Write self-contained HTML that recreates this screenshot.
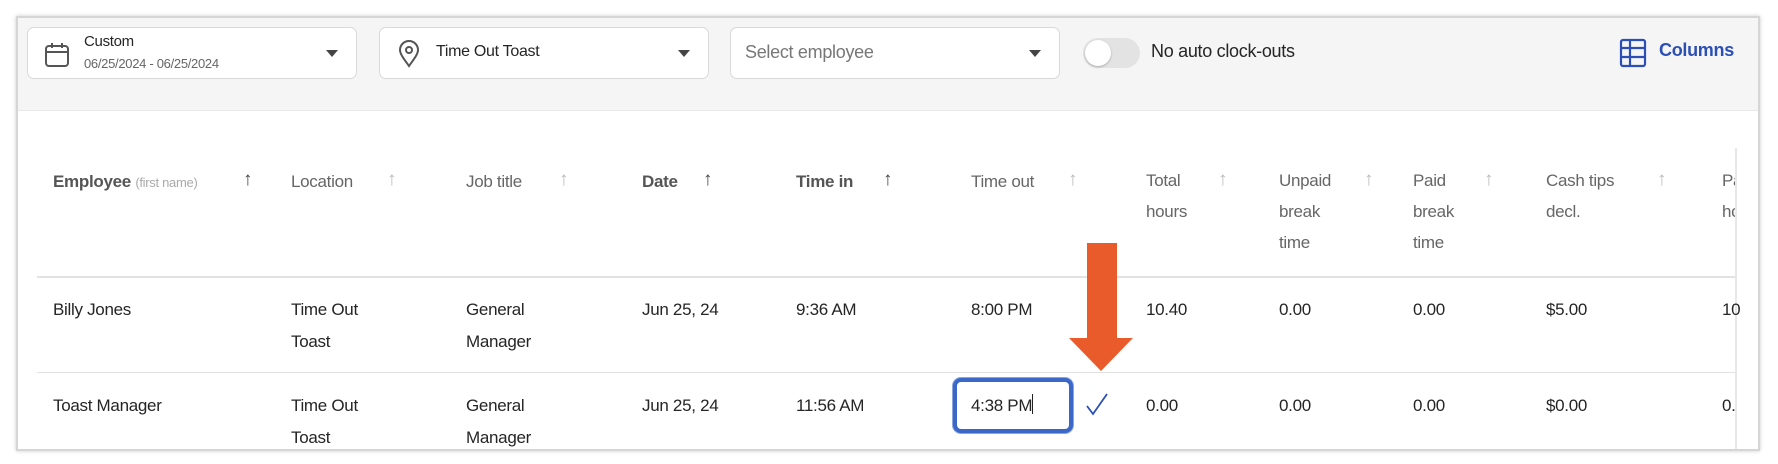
<!DOCTYPE html>
<html><head><meta charset="utf-8"><style>
*{margin:0;padding:0;box-sizing:border-box}
body{width:1778px;height:464px;background:#fff;font-family:"Liberation Sans",sans-serif;color:#252525;position:relative;overflow:hidden}
.card{position:absolute;left:16px;top:16px;width:1744px;height:435px;border:2px solid #d6d6d6;box-shadow:0 0 4px #ccc;background:#fff;overflow:hidden}
.bar{position:absolute;left:0;top:0;width:100%;height:93px;background:#f5f5f5;border-bottom:1px solid #e8e8e8}
.dd{position:absolute;top:9px;height:52px;width:330px;background:#fff;border:1px solid #d9d9d9;border-radius:7px}
.caret{position:absolute;right:18px;top:22px;width:0;height:0;border-left:6px solid transparent;border-right:6px solid transparent;border-top:7px solid #444}
.a{position:absolute;font-size:17px;white-space:nowrap;letter-spacing:-0.3px}
.h{color:#666}
.b{font-weight:bold;color:#555}
.up{color:#bbb;font-size:19px}
.upd{color:#444}
.hl{position:absolute;height:2px;background:#e2e2e2}
</style></head><body>
<div class="card">
<div class="bar">
 <div class="dd" style="left:9px">
  <svg style="position:absolute;left:16px;top:14px" width="26" height="26" viewBox="0 0 26 26" fill="none" stroke="#555" stroke-width="2"><rect x="2" y="4" width="22" height="20" rx="3"/><line x1="2" y1="10" x2="24" y2="10"/><line x1="8" y1="1" x2="8" y2="6"/><line x1="18" y1="1" x2="18" y2="6"/></svg>
  <div class="a" style="left:56px;top:5px;font-size:15px">Custom</div>
  <div class="a" style="left:56px;top:28px;font-size:13px;color:#666">06/25/2024 - 06/25/2024</div>
  <div class="caret"></div>
 </div>
 <div class="dd" style="left:361px">
  <svg style="position:absolute;left:18px;top:12px" width="22" height="28" viewBox="0 0 22 28" fill="none" stroke="#555" stroke-width="2"><path d="M11 26C6 19 2 14 2 10a9 9 0 0 1 18 0c0 4-4 9-9 16z"/><circle cx="11" cy="10" r="3"/></svg>
  <div class="a" style="left:56px;top:15px;font-size:16px">Time Out Toast</div>
  <div class="caret"></div>
 </div>
 <div class="dd" style="left:712px">
  <div class="a" style="left:14px;top:14px;font-size:18px;color:#777">Select employee</div>
  <div class="caret"></div>
 </div>
 <div style="position:absolute;left:1065px;top:20px;width:57px;height:30px;border-radius:15px;background:#e3e3e3"></div>
 <div style="position:absolute;left:1067px;top:22px;width:26px;height:26px;border-radius:13px;background:#fff;box-shadow:0 1px 2px #aaa"></div>
 <div class="a" style="left:1133px;top:23px;font-size:18px">No auto clock-outs</div>
 <svg style="position:absolute;left:1601px;top:20px" width="28" height="30" viewBox="0 0 28 30" fill="none" stroke="#2c4fb5" stroke-width="2.2"><rect x="2" y="2" width="24" height="26" rx="2"/><line x1="2" y1="10" x2="26" y2="10"/><line x1="2" y1="19" x2="26" y2="19"/><line x1="11" y1="2" x2="11" y2="28"/></svg>
 <div class="a" style="left:1641px;top:22px;font-size:18px;font-weight:bold;color:#2c4fb5">Columns</div>
</div>

<!-- header -->
<div class="a b" style="left:35px;top:154px">Employee <span style="font-weight:normal;color:#aaa;font-size:13px">(first name)</span></div>
<div class="a upd" style="left:225px;top:151px;font-size:19px">↑</div>
<div class="a h" style="left:273px;top:154px">Location</div><div class="a up" style="left:369px;top:151px">↑</div>
<div class="a h" style="left:448px;top:154px">Job title</div><div class="a up" style="left:541px;top:151px">↑</div>
<div class="a b" style="left:624px;top:154px">Date</div><div class="a upd" style="left:685px;top:151px;font-size:19px">↑</div>
<div class="a b" style="left:778px;top:154px">Time in</div><div class="a upd" style="left:865px;top:151px;font-size:19px">↑</div>
<div class="a h" style="left:953px;top:154px">Time out</div><div class="a up" style="left:1050px;top:151px">↑</div>
<div class="a h" style="left:1128px;top:147px;line-height:31px">Total<br>hours</div><div class="a up" style="left:1200px;top:151px">↑</div>
<div class="a h" style="left:1261px;top:147px;line-height:31px">Unpaid<br>break<br>time</div><div class="a up" style="left:1346px;top:151px">↑</div>
<div class="a h" style="left:1395px;top:147px;line-height:31px">Paid<br>break<br>time</div><div class="a up" style="left:1466px;top:151px">↑</div>
<div class="a h" style="left:1528px;top:147px;line-height:31px">Cash tips<br>decl.</div><div class="a up" style="left:1639px;top:151px">↑</div>
<div class="a h" style="left:1704px;top:147px;line-height:31px">Pa<br>ho</div>
<div style="position:absolute;left:1717px;top:130px;width:30px;height:320px;background:#fff;border-left:2px solid #e8e8e8"></div>

<div class="hl" style="left:19px;top:258px;width:1698px"></div>
<div class="hl" style="left:19px;top:354px;width:1698px;height:1px"></div>

<!-- row1 -->
<div class="a" style="left:35px;top:276px;line-height:32px">Billy Jones</div>
<div class="a" style="left:273px;top:276px;line-height:32px">Time Out<br>Toast</div>
<div class="a" style="left:448px;top:276px;line-height:32px">General<br>Manager</div>
<div class="a" style="left:624px;top:276px;line-height:32px">Jun 25, 24</div>
<div class="a" style="left:778px;top:276px;line-height:32px">9:36 AM</div>
<div class="a" style="left:953px;top:276px;line-height:32px">8:00 PM</div>
<div class="a" style="left:1128px;top:276px;line-height:32px">10.40</div>
<div class="a" style="left:1261px;top:276px;line-height:32px">0.00</div>
<div class="a" style="left:1395px;top:276px;line-height:32px">0.00</div>
<div class="a" style="left:1528px;top:276px;line-height:32px">$5.00</div>
<div class="a" style="left:1704px;top:276px;line-height:32px">10</div>

<!-- row2 -->
<div class="a" style="left:35px;top:372px;line-height:32px">Toast Manager</div>
<div class="a" style="left:273px;top:372px;line-height:32px">Time Out<br>Toast</div>
<div class="a" style="left:448px;top:372px;line-height:32px">General<br>Manager</div>
<div class="a" style="left:624px;top:372px;line-height:32px">Jun 25, 24</div>
<div class="a" style="left:778px;top:372px;line-height:32px">11:56 AM</div>
<div style="position:absolute;left:935px;top:360px;width:120px;height:55px;border:4px solid #3b68c7;border-radius:8px;background:#fff;box-shadow:0 0 0 1px #8aa6e0"></div>
<div class="a" style="left:953px;top:372px;line-height:32px">4:38 PM<span style="display:inline-block;width:1px;height:20px;background:#222;vertical-align:-3px"></span></div>
<svg style="position:absolute;left:1067px;top:374px" width="24" height="24" viewBox="0 0 24 24" fill="none" stroke="#2c4fb5" stroke-width="1.8"><path d="M2 14l6 8L22 2"/></svg>
<div class="a" style="left:1128px;top:372px;line-height:32px">0.00</div>
<div class="a" style="left:1261px;top:372px;line-height:32px">0.00</div>
<div class="a" style="left:1395px;top:372px;line-height:32px">0.00</div>
<div class="a" style="left:1528px;top:372px;line-height:32px">$0.00</div>
<div class="a" style="left:1704px;top:372px;line-height:32px">0.</div>

<!-- arrow -->
<svg style="position:absolute;left:1051px;top:225px" width="66" height="130" viewBox="0 0 66 130"><rect x="18" y="0" width="30" height="96" fill="#e95b2b"/><path d="M0 95H64L32 128Z" fill="#e95b2b"/></svg>
</div>
</body></html>
